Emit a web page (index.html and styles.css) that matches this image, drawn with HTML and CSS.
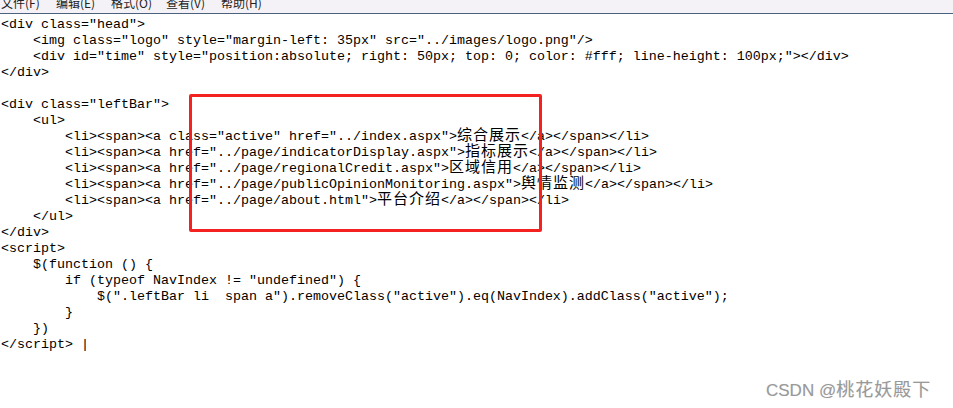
FILE: index.html
```html
<!DOCTYPE html>
<html>
<head>
<meta charset="utf-8">
<link rel="stylesheet" href="styles.css">
</head>
<body>
<div class="menubar">
  <span class="menu-item">文件(F)</span>
  <span class="menu-item">编辑(E)</span>
  <span class="menu-item">格式(O)</span>
  <span class="menu-item">查看(V)</span>
  <span class="menu-item">帮助(H)</span>
</div>
<div class="editor">
<pre class="code">&lt;div class="head"&gt;
    &lt;img class="logo" style="margin-left: 35px" src="../images/logo.png"/&gt;
    &lt;div id="time" style="position:absolute; right: 50px; top: 0; color: #fff; line-height: 100px;"&gt;&lt;/div&gt;
&lt;/div&gt;

&lt;div class="leftBar"&gt;
    &lt;ul&gt;
        &lt;li&gt;&lt;span&gt;&lt;a class="active" href="../index.aspx"&gt;<span class="cjk">综合展示</span>&lt;/a&gt;&lt;/span&gt;&lt;/li&gt;
        &lt;li&gt;&lt;span&gt;&lt;a href="../page/indicatorDisplay.aspx"&gt;<span class="cjk">指标展示</span>&lt;/a&gt;&lt;/span&gt;&lt;/li&gt;
        &lt;li&gt;&lt;span&gt;&lt;a href="../page/regionalCredit.aspx"&gt;<span class="cjk">区域信用</span>&lt;/a&gt;&lt;/span&gt;&lt;/li&gt;
        &lt;li&gt;&lt;span&gt;&lt;a href="../page/publicOpinionMonitoring.aspx"&gt;<span class="cjk">舆情监测</span>&lt;/a&gt;&lt;/span&gt;&lt;/li&gt;
        &lt;li&gt;&lt;span&gt;&lt;a href="../page/about.html"&gt;<span class="cjk">平台介绍</span>&lt;/a&gt;&lt;/span&gt;&lt;/li&gt;
    &lt;/ul&gt;
&lt;/div&gt;
&lt;script&gt;
    $(function () {
        if (typeof NavIndex != "undefined") {
            $(".leftBar li  span a").removeClass("active").eq(NavIndex).addClass("active");
        }
    })
&lt;/script&gt; |</pre>
<div class="highlight-box"></div>
</div>
<div class="watermark"><span class="wm-latin">CSDN @</span><span class="wm-cjk">桃花妖殿下</span></div>
</body>
</html>
```

FILE: styles.css
```css
html, body {
  margin: 0;
  padding: 0;
  background: #fff;
  width: 953px;
  height: 408px;
  overflow: hidden;
  position: relative;
}

.menubar {
  height: 13px;
  background: #f4f2f7;
  border-bottom: 1px solid #4a6280;
  display: flex;
  gap: 19px;
  padding-left: 1px;
  overflow: hidden;
  box-sizing: content-box;
}

.menu-item {
  font-family: "Noto Sans CJK SC", sans-serif;
  font-size: 12px;
  line-height: 12px;
  color: #222;
  margin-top: -3px;
  width: 36px;
  white-space: nowrap;
}

.editor {
  position: relative;
}

.code {
  margin: 0;
  padding: 3px 0 0 1px;
  font-family: "Liberation Mono", monospace;
  font-size: 13.33px;
  line-height: 16px;
  color: #000;
  white-space: pre;
}

.cjk {
  font-family: "Noto Sans CJK SC", sans-serif;
  font-size: 15px;
  letter-spacing: 1px;
  line-height: 0;
}

.highlight-box {
  position: absolute;
  left: 189px;
  top: 80px;
  width: 347px;
  height: 132px;
  border: 3px solid #f42121;
  border-radius: 2px;
}

.watermark {
  position: absolute;
  left: 766px;
  top: 377px;
  line-height: 22px;
  color: #999;
  text-shadow: 0 0 1px #e0e0e0;
  white-space: nowrap;
}

.wm-latin {
  font-family: "Liberation Sans", sans-serif;
  font-size: 17px;
}

.wm-cjk {
  font-family: "Noto Sans CJK SC", sans-serif;
  font-size: 18px;
  letter-spacing: 1px;
}
```
